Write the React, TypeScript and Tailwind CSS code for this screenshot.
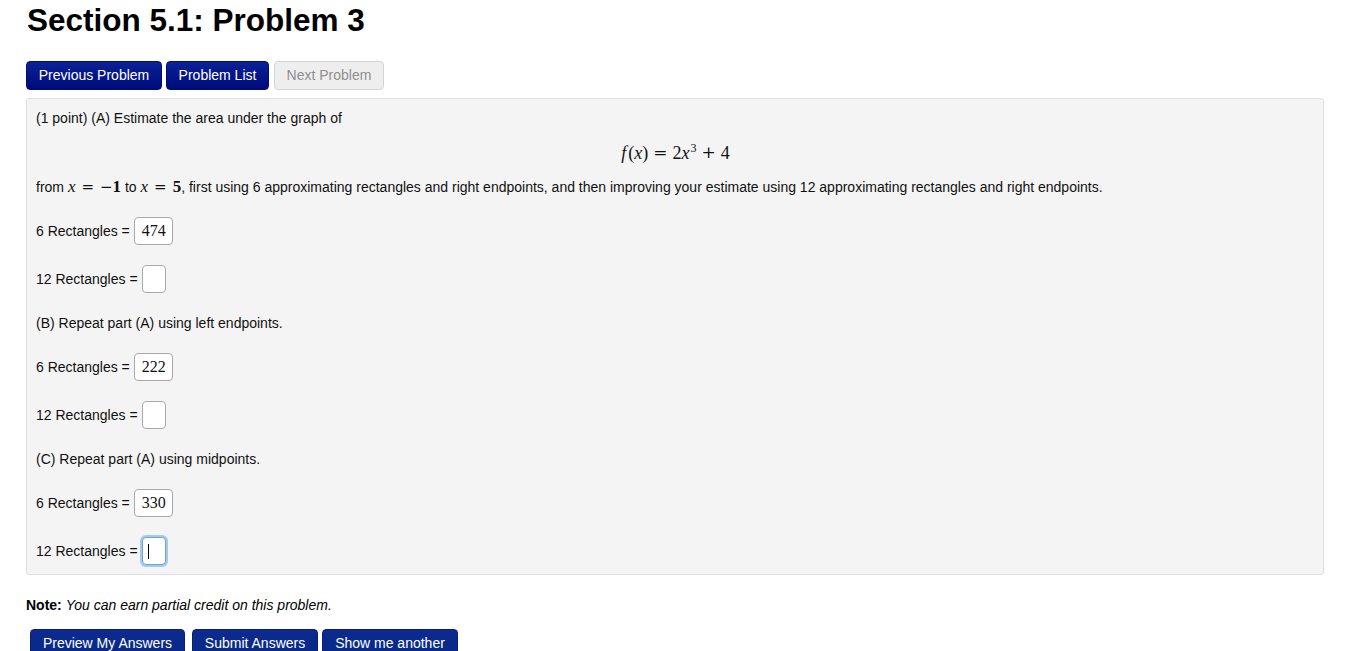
import React from "react";

const sans = { fontFamily: '"Liberation Sans", Arial, sans-serif' };

function MathVar({ children }: { children: React.ReactNode }) {
  return <span className="font-['Liberation_Serif',serif] italic text-[17px]">{children}</span>;
}

function MathOp({ children, className = "" }: { children: React.ReactNode; className?: string }) {
  return <span className={`font-['DejaVu_Serif',serif] text-[15px] ${className}`}>{children}</span>;
}

function MathNum({ children }: { children: React.ReactNode }) {
  return <span className="font-['Liberation_Serif',serif] font-bold text-[17px]">{children}</span>;
}

function AnswerRow({
  label,
  value,
  focused = false,
  className = "",
}: {
  label: string;
  value?: string;
  focused?: boolean;
  className?: string;
}) {
  const box = value ? "w-[39px] px-[7px]" : "w-[24px]";
  return (
    <div className={`flex h-[28px] items-center ${className}`}>
      <span className="mr-[4px]">{label}</span>
      <span
        className={`flex h-[28px] items-center rounded-[4px] border bg-white font-['Liberation_Serif',serif] text-[16px] text-[#111] ${box} ${
          focused ? "border-[#6aa6dc] shadow-[0_0_0_2px_rgba(110,165,220,0.55)]" : "border-[#a9a9a9]"
        }`}
      >
        {value}
        {focused && <span className="ml-[5px] h-[15px] w-px bg-black" />}
      </span>
    </div>
  );
}

function NavButton({
  children,
  disabled = false,
  className = "",
}: {
  children: React.ReactNode;
  disabled?: boolean;
  className?: string;
}) {
  return (
    <button
      type="button"
      className={`h-[29px] whitespace-nowrap rounded-[4px] border text-[14px] ${
        disabled
          ? "border-[#d4d4d4] bg-[#eeeeee] text-[#8f8f8f]"
          : "border-[#00106a] bg-gradient-to-b from-[#0b2196] to-[#00097b] text-white"
      } ${className}`}
    >
      {children}
    </button>
  );
}

function SubmitButton({ children, className = "" }: { children: React.ReactNode; className?: string }) {
  return (
    <button
      type="button"
      className={`h-[30px] whitespace-nowrap rounded-t-[4px] border border-[#0a1f7a] bg-gradient-to-b from-[#0d2a8f] to-[#062a86] pb-[1px] text-[14px] text-white ${className}`}
    >
      {children}
    </button>
  );
}

export default function App() {
  return (
    <div className="h-[651px] overflow-hidden bg-white pl-[26px] pr-[39px] text-[14px] text-black" style={sans}>
      <h1 className="pl-[1px] text-[31.5px] font-bold leading-[40px]">Section 5.1: Problem 3</h1>

      <div className="mt-[21px] flex">
        <NavButton className="w-[136px]">Previous Problem</NavButton>
        <NavButton className="ml-[4px] w-[103px]">Problem List</NavButton>
        <NavButton className="ml-[5px] w-[110px]" disabled>
          Next Problem
        </NavButton>
      </div>

      <div className="mt-[8px] rounded-[3px] border border-[#e0e0e0] bg-[#f4f4f4] pb-[9px] pl-[9px] pt-[10px] text-[#111]">
        <p className="h-[18px] leading-[18px]">(1 point) (A) Estimate the area under the graph of</p>

        <div className="mt-[14px] flex h-[24px] items-center justify-center pr-[8px] font-['Liberation_Serif',serif] text-[18px]">
          <span className="italic">f</span>
          <span className="ml-[2px]">(</span>
          <span className="italic">x</span>
          <span>)</span>
          <MathOp className="mx-[5px] text-[17px]">=</MathOp>
          <span>2</span>
          <span className="italic">x</span>
          <span className="relative -top-[5px] ml-[1px] text-[12px]">3</span>
          <MathOp className="mx-[5px] text-[17px]">+</MathOp>
          <span>4</span>
        </div>

        <p className="mt-[13px] h-[18px] leading-[18px]">
          from <MathVar>x</MathVar>
          <MathOp className="mx-[6px]">=</MathOp>
          <MathOp>−</MathOp>
          <MathNum>1</MathNum> to <MathVar>x</MathVar>
          <MathOp className="mx-[6px]">=</MathOp>
          <MathNum>5</MathNum>, first using 6 approximating rectangles and right endpoints, and then improving your
          estimate using 12 approximating rectangles and right endpoints.
        </p>

        <AnswerRow className="mt-[21px]" label="6 Rectangles =" value="474" />
        <AnswerRow className="mt-[20px]" label="12 Rectangles =" />

        <p className="mt-[21px] h-[18px] leading-[18px]">(B) Repeat part (A) using left endpoints.</p>
        <AnswerRow className="mt-[21px]" label="6 Rectangles =" value="222" />
        <AnswerRow className="mt-[20px]" label="12 Rectangles =" />

        <p className="mt-[21px] h-[18px] leading-[18px]">(C) Repeat part (A) using midpoints.</p>
        <AnswerRow className="mt-[21px]" label="6 Rectangles =" value="330" />
        <AnswerRow className="mt-[20px]" label="12 Rectangles =" focused />
      </div>

      <p className="mt-[21px] h-[18px] leading-[18px] text-[14px]">
        <b>Note:</b> <i>You can earn partial credit on this problem.</i>
      </p>

      <div className="ml-[4px] mt-[15px] flex">
        <SubmitButton className="mr-[7px] w-[155px]">Preview My Answers</SubmitButton>
        <SubmitButton className="mr-[4px] w-[126px]">Submit Answers</SubmitButton>
        <SubmitButton className="w-[136px]">Show me another</SubmitButton>
      </div>
    </div>
  );
}
